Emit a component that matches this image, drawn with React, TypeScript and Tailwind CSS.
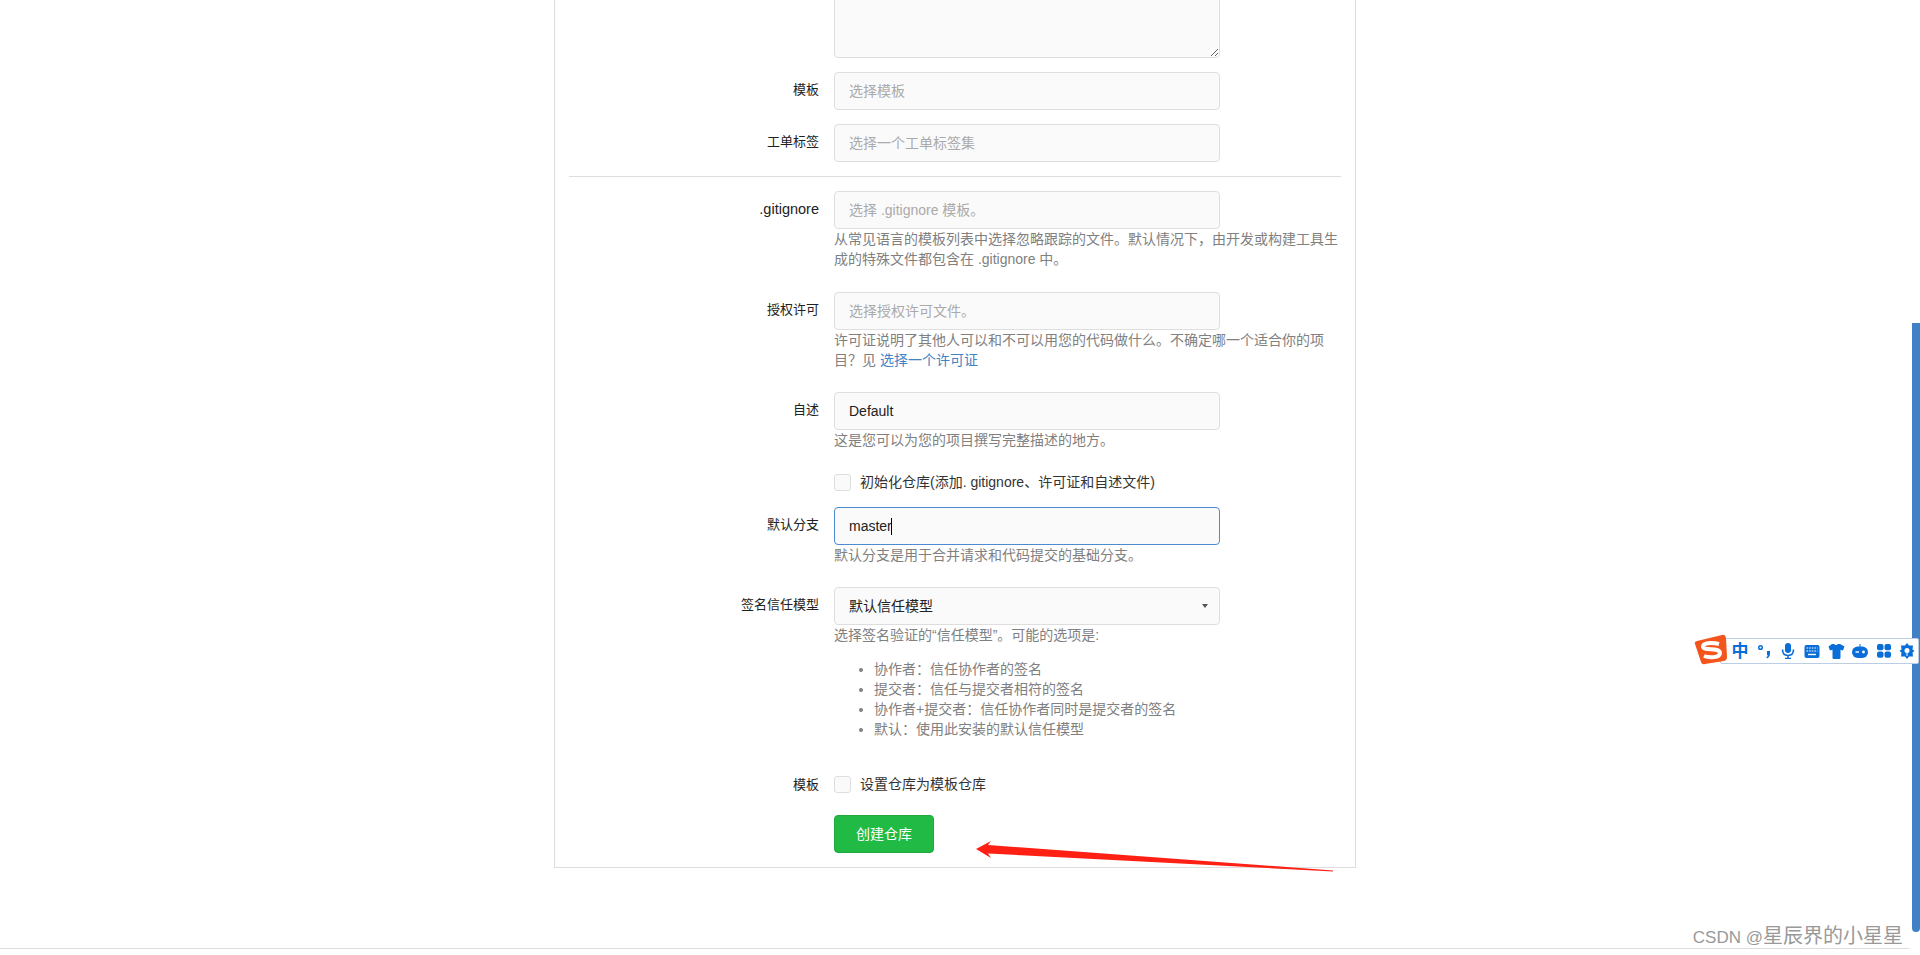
import React from "react";

const inputClass =
    "block w-[386px] h-[38px] px-[14px] bg-[#fafafa] border border-[#dedede] rounded-[4px] text-[14px] text-[#212121] placeholder:text-[#aaaaaa] outline-none";
const helpClass = "text-[14px] leading-[20px] text-[#808080]";

function Row({ label, top, labelSize = "text-[13px]", children }: { label: string; top: string; labelSize?: string; children: React.ReactNode }) {
    return (
        <div className={`flex ${top}`}>
            <label className={`w-[264px] mr-[15px] shrink-0 text-right ${labelSize} leading-[36px] text-[#212121]`}>{label}</label>
            <div className="w-[506px]">{children}</div>
        </div>
    );
}

function CheckRow({ label, top, text }: { label?: string; top: string; text: string }) {
    return (
        <div className={`flex items-center h-[17px] ${top}`}>
            <label className="w-[264px] mr-[15px] shrink-0 text-right text-[13px] text-[#212121]">{label}</label>
            <span className="w-[17px] h-[17px] mr-[9px] bg-[#fafafa] border border-[#dedede] rounded-[3px]" />
            <span className="text-[14px] text-[#333333]">{text}</span>
        </div>
    );
}

function SogouBar() {
    const blue = "#0a6ed8";
    return (
        <div className="absolute left-[1720px] top-[638px] w-[199px] h-[26px] flex items-center pl-[7px] bg-white border border-[#bccde6] rounded-[2px]">
            <svg className="absolute left-[-27px] top-[-5px]" width="34" height="32" viewBox="0 0 34 32">
                <path d="M3 7 L28 1 Q31 0 32 4 L33 23 Q33 26 30 27 L11 30 Q8 31 7 28 L1 10 Q0 8 3 7 Z" fill="#f4551c" />
                <path d="M25 10 C17 8 8 9 9 13 C10 17 26 13 26 19 C26 24 15 24 10 22" fill="none" stroke="#fff" strokeWidth="4" />
            </svg>
            <span className="w-[24px] text-center text-[17px] font-bold leading-none text-[#0a6ed8]">中</span>
            <svg width="24" height="18" viewBox="0 0 24 18">
                <circle cx="8.5" cy="5.5" r="1.8" fill="none" stroke={blue} strokeWidth="1.5" />
                <path d="M15 9 h3 v2.5 q0 3.5 -3 5 l-0.6 -1 q1.2 -.9 1.3 -2.5 h-.7 z" fill={blue} />
            </svg>
            <svg width="24" height="16" viewBox="0 0 24 16">
                <rect x="9" y="0" width="6" height="10" rx="3" fill={blue} />
                <path d="M6.5 6.5 q0 6 5.5 6 q5.500 0 5.500 -6 M12 12.500 v3.500 M9 15.500 h6" fill="none" stroke={blue} strokeWidth="1.6" />
            </svg>
            <svg width="24" height="13" viewBox="0 0 24 13">
                <rect x="4.500" y="0" width="15" height="13" rx="2" fill={blue} />
                <path d="M6.500 3 h11 M6.500 6 h11" stroke="#fff" strokeWidth="1.2" strokeDasharray="1.6 1" />
                <path d="M8 9.500 h8" stroke="#fff" strokeWidth="1.4" />
            </svg>
            <svg width="24" height="15" viewBox="0 0 24 15">
                <path d="M8 0 h2 q2 2 4 0 h2 l4.500 2.500 -1.500 4 -2.500 -.8 v8 q0 1.300 -1.300 1.300 h-5.400 q-1.300 0 -1.300 -1.300 v-8 l-2.500 .8 -1.500 -4 z" fill={blue} />
            </svg>
            <svg width="24" height="14" viewBox="0 0 24 14">
                <rect x="4" y="2.500" width="16" height="11.500" rx="5.700" fill={blue} />
                <rect x="11.500" y="0" width="1" height="3" fill={blue} />
                <path d="M7.500 8 h3.500" stroke="#fff" strokeWidth="1.400" />
                <circle cx="15.500" cy="8" r="1.400" fill="#fff" />
            </svg>
            <svg width="24" height="14" viewBox="0 0 24 14">
                <rect x="5" y="0" width="6.500" height="6.300" rx="2" fill={blue} />
                <rect x="12.500" y="0" width="6.500" height="6.300" rx="2" fill={blue} />
                <rect x="5" y="7.500" width="6.500" height="6.300" rx="2" fill={blue} />
                <rect x="12.500" y="7.500" width="6.500" height="6.300" rx="2" fill={blue} />
            </svg>
            <svg width="22" height="16" viewBox="0 0 22 16">
                <path d="M11 0 l2 2.500 h4 l-.5 4 2 1.500 -2 1.500 .5 4 h-4 l-2 2.500 -2 -2.500 h-4 l.5 -4 -2 -1.500 2 -1.500 -.5 -4 h4 z" fill={blue} />
                <circle cx="11" cy="7.500" r="2.500" fill="#fff" />
                <path d="M11 8 v5" stroke="#fff" strokeWidth="1" />
            </svg>
        </div>
    );
}

export default function App() {
    return (
        <div className="relative w-[1920px] h-[955px] overflow-hidden bg-white font-['Liberation_Sans','Noto_Sans_CJK_SC',sans-serif]">
            <div className="ml-[554px] w-[802px] h-[868px] border-x border-b border-[#dedede]">
                <div className="flex">
                    <div className="w-[279px] shrink-0" />
                    <textarea
                        readOnly
                        className="block -mt-[100px] w-[386px] h-[158px] bg-[#fafafa] border border-[#dedede] rounded-[4px] outline-none"
                    />
                </div>

                <Row label="模板" top="mt-[14px]">
                    <input readOnly className={inputClass} placeholder="选择模板" />
                </Row>
                <Row label="工单标签" top="mt-[14px]">
                    <input readOnly className={inputClass} placeholder="选择一个工单标签集" />
                </Row>

                <hr className="mx-[14px] mt-[14px] border-t border-[#dedede]" />

                <Row label=".gitignore" labelSize="text-[14.500px]" top="mt-[14px]">
                    <input readOnly className={inputClass} placeholder="选择 .gitignore 模板。" />
                    <p className={helpClass}>从常见语言的模板列表中选择忽略跟踪的文件。默认情况下，由开发或构建工具生成的特殊文件都包含在 .gitignore 中。</p>
                </Row>
                <Row label="授权许可" top="mt-[23px]">
                    <input readOnly className={inputClass} placeholder="选择授权许可文件。" />
                    <p className={helpClass}>
                        许可证说明了其他人可以和不可以用您的代码做什么。不确定哪一个适合你的项目？见 <a className="text-[#4183c4]">选择一个许可证</a>
                    </p>
                </Row>
                <Row label="自述" top="mt-[22px]">
                    <input readOnly className={inputClass} value="Default" />
                    <p className={helpClass}>这是您可以为您的项目撰写完整描述的地方。</p>
                </Row>

                <CheckRow top="mt-[24px]" text="初始化仓库(添加. gitignore、许可证和自述文件)" />

                <Row label="默认分支" top="mt-[16px]">
                    <div className="relative w-[386px]">
                        <input readOnly className={`${inputClass} !border-[#4d8ad0]`} value="master" />
                        <span className="absolute left-[57px] top-[11px] w-px h-[17px] bg-black" />
                    </div>
                    <p className={helpClass}>默认分支是用于合并请求和代码提交的基础分支。</p>
                </Row>

                <Row label="签名信任模型" top="mt-[22px]">
                    <div className="flex items-center justify-between w-[386px] h-[38px] pl-[14px] pr-[11px] bg-[#fafafa] border border-[#dedede] rounded-[4px] text-[14px] text-[#212121]">
                        <span>默认信任模型</span>
                        <span className="w-0 h-0 border-x-[3px] border-x-transparent border-t-[4px] border-t-[#555555]" />
                    </div>
                    <p className={helpClass}>选择签名验证的“信任模型”。可能的选项是:</p>
                    <ul className={`${helpClass} mt-[14px] pl-[40px] list-disc`}>
                        <li>协作者：信任协作者的签名</li>
                        <li>提交者：信任与提交者相符的签名</li>
                        <li>协作者+提交者：信任协作者同时是提交者的签名</li>
                        <li>默认：使用此安装的默认信任模型</li>
                    </ul>
                </Row>

                <CheckRow label="模板" top="mt-[37px]" text="设置仓库为模板仓库" />

                <div className="mt-[22px] ml-[279px] flex items-center justify-center w-[100px] h-[38px] bg-[#21ba45] border border-[#1ea83e] rounded-[4px] text-[14px] text-white">
                    创建仓库
                </div>
            </div>

            <div className="mt-[80px] w-[1909px] border-t border-[#dddddd]" />

            {/* red arrow drawn over the screenshot */}
            <svg className="absolute left-0 top-0 pointer-events-none" width="1920" height="955" viewBox="0 0 1920 955">
                <polygon points="976,849 991,841 988,845 1333,870.500 1333,871.500 988,853.500 991,858" fill="#ff2014" />
            </svg>

            {/* scrollbar */}
            <div className="absolute left-[1912px] top-[323px] w-[8px] h-[609px] bg-[#4080c4] rounded-b-[4px]" />

            <SogouBar />

            <div className="absolute right-[17px] top-[923px] text-[20px] leading-[26px] text-[#999999]">
                <span className="text-[17px]">CSDN @</span>星辰界的小星星
            </div>
        </div>
    );
}
